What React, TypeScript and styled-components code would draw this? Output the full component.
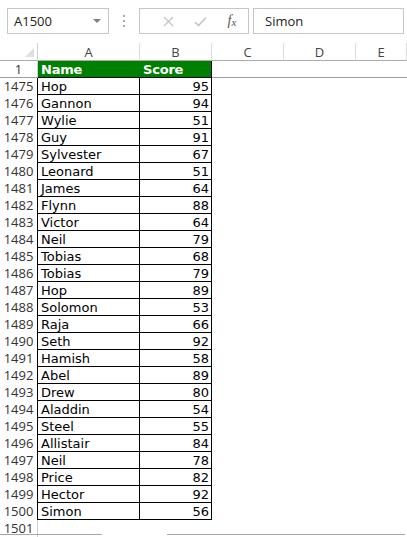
import React from "react";
import styled, { createGlobalStyle } from "styled-components";

const Global = createGlobalStyle`
  html, body { margin: 0; padding: 0; background: #fff; overflow: hidden; }
  #root { width: 407px; height: 537px; overflow: hidden; }
`;

const Page = styled.div`
  width: 407px;
  height: 537px;
  display: flex;
  flex-direction: column;
  overflow: hidden;
  font-family: "Open Sans", "Noto Sans", sans-serif;
`;

const Toolbar = styled.div`
  height: 43px;
  box-sizing: border-box;
  padding: 8px 3px 0 7px;
  display: flex;
  align-items: flex-start;
`;

const Box = styled.div`
  height: 26px;
  box-sizing: border-box;
  border: 1px solid #c6c6c6;
  display: flex;
  align-items: center;
  font-size: 13px;
  color: #222;
`;

const NameBox = styled(Box)`
  width: 102px;
  padding: 0 7px 0 6px;
  justify-content: space-between;
`;

const Caret = styled.span`
  width: 0;
  height: 0;
  border-left: 4px solid transparent;
  border-right: 4px solid transparent;
  border-top: 4px solid #808080;
`;

const Dots = styled.div`
  width: 30px;
  height: 26px;
  display: flex;
  flex-direction: column;
  align-items: center;
  justify-content: center;
  gap: 3px;
  & > span {
    width: 2px;
    height: 2px;
    background: #a8a8a8;
  }
`;

const FxBox = styled(Box)`
  width: 110px;
  padding: 0 0 0 12px;
  gap: 0;
`;

const IconSlot = styled.span`
  width: 35px;
  display: flex;
  align-items: center;
  justify-content: center;
`;

const Fx = styled.span`
  font-family: "Liberation Serif", "DejaVu Serif", serif;
  font-style: italic;
  font-size: 14px;
  color: #555;
  & sub {
    font-size: 11px;
    vertical-align: -1px;
  }
`;

const Formula = styled(Box)`
  flex: 1;
  margin-left: 4px;
  padding-left: 11px;
`;

const Sheet = styled.div`
  display: grid;
  grid-template-columns: 38px 102px 72px 72px 72px 1fr;
  grid-auto-rows: 17px;
  grid-template-rows: 18px;
`;

const ColHead = styled.div<{ $corner?: boolean }>`
  box-sizing: border-box;
  border-right: 1px solid ${(p) => (p.$corner ? "#d0d0d0" : "#dcdcdc")};
  border-bottom: 1px solid #ababab;
  display: flex;
  align-items: center;
  justify-content: center;
  font-size: 13px;
  color: #444;
  position: relative;
  &:last-child { border-right: none; }
`;

const CornerMark = styled.span`
  position: absolute;
  right: 3px;
  bottom: 3px;
  width: 0;
  height: 0;
  border-left: 9px solid transparent;
  border-bottom: 9px solid #dfdfdf;
`;

const RowHead = styled.div<{ $dark?: boolean; $frozen?: boolean }>`
  box-sizing: border-box;
  border-right: 1px solid ${(p) => (p.$dark ? "#000" : "#cfcfcf")};
  border-bottom: ${(p) => (p.$frozen ? "1px solid #9e9e9e" : "none")};
  display: flex;
  align-items: center;
  justify-content: center;
  font-size: 13px;
  color: #333;
  line-height: 1;
`;

const HeadCell = styled.div<{ $last?: boolean }>`
  box-sizing: border-box;
  background: #008000;
  border-bottom: 1px solid #000;
  border-right: ${(p) => (p.$last ? "1px solid #000" : "none")};
  color: #fff;
  font-family: "DejaVu Sans", Verdana, sans-serif;
  font-weight: bold;
  font-size: 13px;
  letter-spacing: -0.2px;
  display: flex;
  align-items: center;
  padding: 0 3px;
`;

const Cell = styled.div<{ $num?: boolean }>`
  box-sizing: border-box;
  border-right: 1px solid #000;
  border-bottom: 1px solid #000;
  font-family: "DejaVu Sans", Verdana, sans-serif;
  font-size: 13px;
  color: #000;
  display: flex;
  align-items: center;
  justify-content: ${(p) => (p.$num ? "flex-end" : "flex-start")};
  padding: 0 2px 0 3px;
  white-space: nowrap;
`;

const Frozen = styled.div`
  box-sizing: border-box;
  border-bottom: 1px solid #9e9e9e;
`;

const Blank = styled.div``;

const BottomBar = styled.div`
  display: flex;
  height: 3px;
  margin-top: -3px;
  & > span {
    border-top: 1px solid #a6a6a6;
  }
`;

const Seg = styled.span<{ $w: string; $ml?: number }>`
  width: ${(p) => p.$w};
  margin-left: ${(p) => p.$ml ?? 0}px;
`;

const rows: [number, string, number][] = [
  [1475, "Hop", 95],
  [1476, "Gannon", 94],
  [1477, "Wylie", 51],
  [1478, "Guy", 91],
  [1479, "Sylvester", 67],
  [1480, "Leonard", 51],
  [1481, "James", 64],
  [1482, "Flynn", 88],
  [1483, "Victor", 64],
  [1484, "Neil", 79],
  [1485, "Tobias", 68],
  [1486, "Tobias", 79],
  [1487, "Hop", 89],
  [1488, "Solomon", 53],
  [1489, "Raja", 66],
  [1490, "Seth", 92],
  [1491, "Hamish", 58],
  [1492, "Abel", 89],
  [1493, "Drew", 80],
  [1494, "Aladdin", 54],
  [1495, "Steel", 55],
  [1496, "Allistair", 84],
  [1497, "Neil", 78],
  [1498, "Price", 82],
  [1499, "Hector", 92],
  [1500, "Simon", 56],
];

export default function App() {
  return (
    <Page>
      <Global />
      <Toolbar>
        <NameBox>
          <span>A1500</span>
          <Caret />
        </NameBox>
        <Dots>
          <span />
          <span />
          <span />
        </Dots>
        <FxBox>
          <IconSlot>
            <svg width="11" height="11" viewBox="0 0 11 11">
              <path d="M1 1 L10 10 M10 1 L1 10" stroke="#c4c4c4" strokeWidth="1.3" />
            </svg>
          </IconSlot>
          <IconSlot>
            <svg width="13" height="11" viewBox="0 0 13 11">
              <path d="M1 6 L4.5 9.5 L12 1.5" stroke="#c4c4c4" strokeWidth="1.6" fill="none" />
            </svg>
          </IconSlot>
          <IconSlot>
            <Fx>
              f<sub>x</sub>
            </Fx>
          </IconSlot>
        </FxBox>
        <Formula>Simon</Formula>
      </Toolbar>
      <Sheet>
        <ColHead $corner>
          <CornerMark />
        </ColHead>
        <ColHead>A</ColHead>
        <ColHead>B</ColHead>
        <ColHead>C</ColHead>
        <ColHead>D</ColHead>
        <ColHead>E</ColHead>

        <RowHead $frozen>1</RowHead>
        <HeadCell>Name</HeadCell>
        <HeadCell $last>Score</HeadCell>
        <Frozen />
        <Frozen />
        <Frozen />

        {rows.map(([n, name, score]) => (
          <React.Fragment key={n}>
            <RowHead $dark>{n}</RowHead>
            <Cell>{name}</Cell>
            <Cell $num>{score}</Cell>
            <Blank />
            <Blank />
            <Blank />
          </React.Fragment>
        ))}
        <RowHead>1501</RowHead>
      </Sheet>
      <BottomBar>
        <Seg $w="102px" />
        <Seg $w="238px" $ml={65} />
      </BottomBar>
    </Page>
  );
}
